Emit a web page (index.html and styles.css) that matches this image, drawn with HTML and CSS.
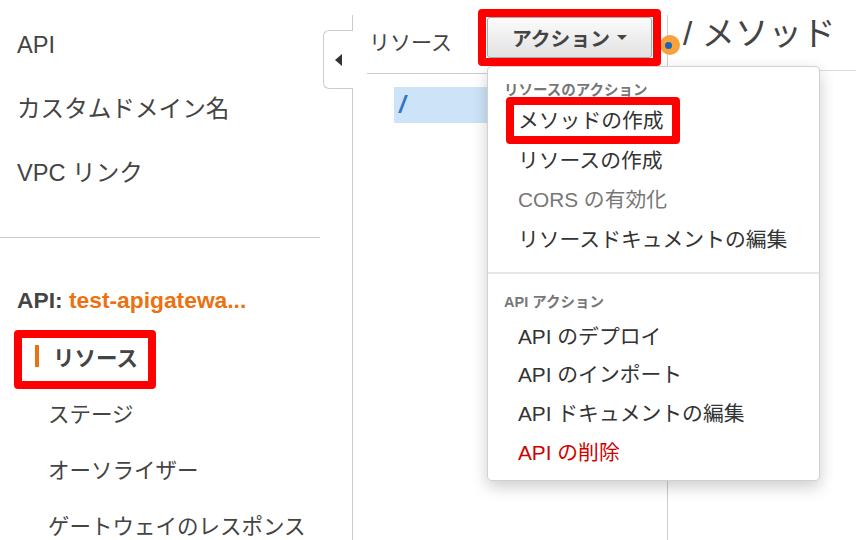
FILE: index.html
```html
<!DOCTYPE html>
<html lang="ja">
<head>
<meta charset="utf-8">
<title>API Gateway</title>
<link rel="stylesheet" href="styles.css">
</head>
<body>
<div class="app">
  <aside class="sidebar">
    <ul class="nav-top">
      <li>API</li>
      <li>カスタムドメイン名</li>
      <li>VPC リンク</li>
    </ul>
    <hr class="nav-divider">
    <div class="api-title">API: <span class="api-name">test-apigatewa...</span></div>
    <ul class="nav-sub">
      <li class="active"><span class="bar"></span>リソース<span class="mark mark-res"></span></li>
      <li>ステージ</li>
      <li>オーソライザー</li>
      <li>ゲートウェイのレスポンス</li>
    </ul>
    <div class="collapse-tab"><span class="tri"></span></div>
  </aside>
  <section class="resources">
    <div class="res-header">
      <span class="res-title">リソース</span>
      <div class="action-wrap">
        <button class="action-btn" type="button">アクション<span class="caret"></span></button>
        <span class="mark mark-btn"></span>
        <div class="dropdown">
          <div class="dd-header">リソースのアクション</div>
          <ul class="dd-list">
            <li class="dd-item">メソッドの作成<span class="mark mark-method"></span></li>
            <li class="dd-item">リソースの作成</li>
            <li class="dd-item disabled">CORS の有効化</li>
            <li class="dd-item">リソースドキュメントの編集</li>
          </ul>
          <div class="dd-divider"></div>
          <div class="dd-header second">API アクション</div>
          <ul class="dd-list second">
            <li class="dd-item">API のデプロイ</li>
            <li class="dd-item">API のインポート</li>
            <li class="dd-item">API ドキュメントの編集</li>
            <li class="dd-item danger">API の削除</li>
          </ul>
        </div>
      </div>
    </div>
    <div class="tree-row"><span class="slash">/</span></div>
  </section>
  <section class="detail">
    <div class="detail-header">
      <span class="status-dot"><span class="dot-inner"></span></span>
      <h1 class="detail-title">/ メソッド</h1>
    </div>
  </section>
</div>
</body>
</html>
```

FILE: styles.css
```css
html, body {
  margin: 0;
  padding: 0;
  background: #fff;
}

body {
  font-family: "Liberation Sans", "Noto Sans CJK JP", sans-serif;
  color: #444;
}

.app {
  display: flex;
  width: 856px;
  height: 540px;
  padding-top: 15px;
  box-sizing: border-box;
  overflow: hidden;
}

/* ---------- sidebar ---------- */
.sidebar {
  position: relative;
  flex: none;
  width: 353px;
  box-sizing: border-box;
  border-right: 1px solid #ccc;
}

.nav-top {
  list-style: none;
  margin: -2px 0 0;
  padding: 0 0 0 17px;
}

.nav-top li {
  height: 64px;
  line-height: 64px;
  font-size: 23.6px;
  white-space: nowrap;
}

.nav-divider {
  margin: 32px 0 0;
  width: 320px;
  height: 0;
  border: 0;
  border-top: 1px solid #ccc;
}

.api-title {
  margin-top: 34px;
  height: 56px;
  line-height: 56px;
  padding-left: 17px;
  font-size: 22.8px;
  font-weight: bold;
  color: #444;
  white-space: nowrap;
}

.api-name {
  color: #ec7211;
}

.nav-sub {
  list-style: none;
  margin: 0;
  padding: 0;
}

.nav-sub li {
  position: relative;
  display: flex;
  align-items: center;
  height: 56px;
  padding-left: 48px;
  font-size: 21.5px;
  white-space: nowrap;
}

.nav-sub li.active {
  padding-left: 35px;
  font-weight: bold;
}

.bar {
  width: 4px;
  height: 22px;
  margin-right: 14px;
  background: #ec7211;
}

.collapse-tab {
  position: absolute;
  top: 15px;
  right: -1px;
  width: 30px;
  height: 59px;
  box-sizing: border-box;
  border: 1px solid #ccc;
  border-right: 0;
  border-radius: 6px 0 0 6px;
  background: #fff;
  display: flex;
  align-items: center;
  justify-content: center;
}

.tri {
  width: 0;
  height: 0;
  border-top: 6px solid transparent;
  border-bottom: 6px solid transparent;
  border-right: 7px solid #333;
}

/* ---------- annotation marks ---------- */
.mark {
  position: absolute;
  box-sizing: border-box;
  border: 8px solid #ff0000;
  border-radius: 4px;
  pointer-events: none;
  z-index: 20;
}

.mark-res {
  left: 14px;
  top: 2px;
  width: 142px;
  height: 59px;
}

.mark-btn {
  left: -9px;
  top: -8px;
  width: 183px;
  height: 57px;
}

.mark-method {
  left: 18px;
  top: -4px;
  width: 174px;
  height: 47px;
}

/* ---------- resources column ---------- */
.resources {
  position: relative;
  flex: none;
  width: 315px;
  box-sizing: border-box;
  border-right: 1px solid #ccc;
}

.res-header {
  margin-left: 14px;
  height: 59px;
  box-sizing: border-box;
  border-bottom: 1px solid #ccc;
  display: flex;
  justify-content: space-between;
  align-items: flex-start;
}

.res-title {
  padding: 13px 0 0 2px;
  font-size: 21px;
  line-height: 30px;
  color: #444;
}

.action-wrap {
  position: relative;
  margin: 2px 15px 0 0;
}

.action-btn {
  display: flex;
  align-items: center;
  justify-content: center;
  width: 165px;
  height: 41px;
  padding: 0;
  border: 1px solid #aaa;
  border-radius: 3px;
  background: linear-gradient(#fbfbfb, #e2e2e2);
  font-family: inherit;
  font-size: 19.8px;
  font-weight: bold;
  color: #444;
}

.caret {
  width: 0;
  height: 0;
  margin-left: 7px;
  border-left: 5px solid transparent;
  border-right: 5px solid transparent;
  border-top: 5px solid #444;
}

.dropdown {
  position: absolute;
  left: 0;
  top: 49px;
  width: 333px;
  box-sizing: border-box;
  padding-bottom: 7.5px;
  background: #fff;
  border: 1px solid rgba(0, 0, 0, 0.18);
  border-radius: 5px;
  box-shadow: 0 6px 16px rgba(0, 0, 0, 0.2);
  z-index: 10;
}

.dd-header {
  margin-top: 13px;
  padding-left: 16px;
  font-size: 14.5px;
  line-height: 21px;
  font-weight: bold;
  color: #777;
  white-space: nowrap;
}

.dd-header.second {
  margin-top: 17.5px;
}

.dd-list {
  list-style: none;
  margin: 0;
  padding: 0;
}

.dd-list.second {
  margin-top: 5px;
}

.dd-item {
  position: relative;
  padding-left: 30px;
  font-size: 20.8px;
  line-height: 39.5px;
  color: #333;
  white-space: nowrap;
}

.dd-list.second .dd-item {
  line-height: 38.7px;
}

.dd-item.disabled {
  color: #777;
}

.dd-item.danger {
  color: #d10000;
}

.dd-divider {
  margin-top: 13px;
  height: 2px;
  background: #e6e6e6;
}

.tree-row {
  display: flex;
  align-items: center;
  height: 36px;
  margin: 13px 0 0 41px;
  padding-left: 5px;
  background: #cde4f8;
}

.slash {
  font-size: 24px;
  font-weight: bold;
  font-style: italic;
  color: #2f76c4;
}

/* ---------- detail column ---------- */
.detail {
  position: relative;
  flex: 1;
}

.detail-header {
  height: 56px;
  box-sizing: border-box;
  padding-left: 15px;
  border-bottom: 1px solid #ddd;
}

.detail-title {
  margin: 0;
  font-size: 33.5px;
  font-weight: normal;
  line-height: 37px;
  color: #444;
  white-space: nowrap;
}

.status-dot {
  position: absolute;
  left: -8px;
  top: 20px;
  width: 20px;
  height: 20px;
  border-radius: 50%;
  background: #f7a23a;
  display: flex;
  align-items: center;
  justify-content: center;
  z-index: 5;
}

.dot-inner {
  width: 7px;
  height: 7px;
  margin-left: -4px;
  border-radius: 50%;
  background: #1b63b5;
}
```
